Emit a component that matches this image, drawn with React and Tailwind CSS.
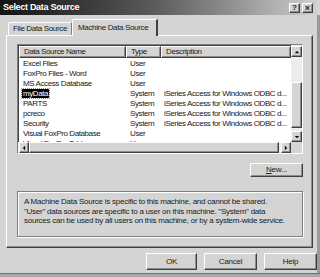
import React from 'react';

const rows = [
  { name: 'Excel Files', type: 'User', desc: '' },
  { name: 'FoxPro Files - Word', type: 'User', desc: '' },
  { name: 'MS Access Database', type: 'User', desc: '' },
  { name: 'myData', type: 'System', desc: 'iSeries Access for Windows ODBC d...', selected: true },
  { name: 'PARTS', type: 'System', desc: 'iSeries Access for Windows ODBC d...' },
  { name: 'pcreco', type: 'System', desc: 'iSeries Access for Windows ODBC d...' },
  { name: 'Security', type: 'System', desc: 'iSeries Access for Windows ODBC d...' },
  { name: 'Visual FoxPro Database', type: 'User', desc: '' },
  { name: 'Visual FoxPro Tables', type: 'User', desc: '' },
];

const raised = 'border border-t-white border-l-white border-r-[#404040] border-b-[#404040] shadow-[inset_-1px_-1px_0_#8c8c8c]';

const Button = ({ children, className = '' }) => (
  <div className={`flex items-center justify-center bg-[#d4d4d4] text-[8px] tracking-[-0.2px] text-[#202020] ${raised} ${className}`}>
    {children}
  </div>
);

const Arrow = ({ dir }) => {
  const pts = {
    up: '1,4 4,1 7,4',
    down: '1,1 4,4 7,1',
    left: '4,1 1,4 4,7',
    right: '1,1 4,4 1,7',
  }[dir];
  const vb = dir === 'up' || dir === 'down' ? '0 0 8 5' : '0 0 5 8';
  return (
    <svg viewBox={vb} className={dir === 'up' || dir === 'down' ? 'w-[6px] h-[4px]' : 'w-[4px] h-[6px]'}>
      <polygon points={pts} fill="#000" />
    </svg>
  );
};

export default function App() {
  return (
    <div className="w-[320px] h-[277px] bg-[#d4d4d4] overflow-hidden flex flex-col font-['Liberation_Sans',Arial,sans-serif] text-[#202020]">
      {/* title bar */}
      <div className="h-[15px] flex items-center justify-between pl-[3px] pr-[4px] bg-gradient-to-r from-[#141414] via-[#5e5e5e] to-[#d0d0d0] mr-[3px]">
        <span className="text-white font-bold text-[9px] leading-none tracking-[-0.3px]">Select Data Source</span>
        <div className="flex gap-[2px] mt-[1px]">
          <div className={`w-[11px] h-[10px] bg-[#d4d4d4] flex items-center justify-center text-[8px] font-bold leading-none ${raised}`}>?</div>
          <div className={`w-[11px] h-[10px] bg-[#d4d4d4] flex items-center justify-center text-[9px] font-bold leading-none ${raised}`}>×</div>
        </div>
      </div>

      <div className="flex-1 flex flex-col border-r-[3px] border-r-[#9a9a9a]">
        {/* tabs */}
        <div className="h-[20px] flex items-end pl-[8px] text-[8px] tracking-[-0.35px]">
          <div className="h-[13px] w-[64px] pl-[4px] flex items-center border-t border-l border-t-white border-l-white border-r border-r-[#808080] rounded-tl-[2px]">
            File Data Source
          </div>
          <div className="h-[17px] w-[86px] -mb-px relative z-10 bg-[#d4d4d4] pl-[5px] flex items-center border-t border-l border-t-white border-l-white border-r-2 border-r-[#404040] rounded-tl-[2px]">
            Machine Data Source
          </div>
        </div>

        {/* panel */}
        <div className="ml-[6px] w-[307px] h-[213px] border border-t-white border-l-white border-r-[#404040] border-b-[#404040] shadow-[inset_-1px_-1px_0_#8c8c8c] flex flex-col pl-[10px] pt-[8px]">
          {/* list */}
          <div className="w-[286px] h-[110px] bg-white border border-t-[#808080] border-l-[#808080] border-r-white border-b-white shadow-[inset_1px_1px_0_#404040] flex flex-col">
            <div className="flex-1 flex min-h-0">
              <div className="flex-1 flex flex-col min-w-0 pl-px pt-px text-[8px] tracking-[-0.4px]">
                <div className="h-[12px] flex leading-none">
                  <div className={`w-[107px] bg-[#d4d4d4] flex items-center pl-[4px] ${raised}`}>Data Source Name</div>
                  <div className={`w-[35px] bg-[#d4d4d4] flex items-center pl-[4px] ${raised}`}>Type</div>
                  <div className={`flex-1 bg-[#d4d4d4] flex items-center pl-[4px] ${raised}`}>Description</div>
                </div>
                <div className="flex-1 overflow-hidden pt-[1px]">
                  {rows.map((r) => (
                    <div key={r.name} className="h-[10px] flex leading-[10px] whitespace-nowrap">
                      <div className="w-[107px] pl-[3px]">
                        <span className={r.selected ? 'bg-black text-white px-[1px] outline outline-1 outline-dotted outline-[#888]' : 'px-[1px]'}>{r.name}</span>
                      </div>
                      <div className="w-[35px] pl-[4px]">{r.type}</div>
                      <div className="flex-1 pl-[3px] overflow-hidden">{r.desc}</div>
                    </div>
                  ))}
                </div>
              </div>
              {/* vertical scrollbar */}
              <div className="w-[11px] flex flex-col bg-[#ececec] pt-px">
                <Button className="h-[11px] w-[11px] shrink-0"><Arrow dir="up" /></Button>
                <div className="h-[25px]" />
                <div className={`h-[46px] bg-[#d4d4d4] ${raised}`} />
                <div className="flex-1" />
                <Button className="h-[11px] w-[11px] shrink-0"><Arrow dir="down" /></Button>
              </div>
            </div>
            {/* horizontal scrollbar */}
            <div className="h-[11px] flex bg-[#ececec] pl-px">
              <Button className="w-[10px] h-[11px] shrink-0"><Arrow dir="left" /></Button>
              <div className={`w-[250px] h-[11px] bg-[#d4d4d4] ${raised}`} />
              <div className="flex-1" />
              <Button className="w-[10px] h-[11px] shrink-0"><Arrow dir="right" /></Button>
              <div className="w-[11px] bg-[#d4d4d4]" />
            </div>
          </div>

          {/* New button */}
          <div className="w-[286px] flex justify-end mt-[9px]">
            <Button className="w-[53px] h-[14px]"><span><u>N</u>ew...</span></Button>
          </div>

          {/* info box */}
          <div className="w-[286px] h-[46px] mt-[14px] border border-[#808080] shadow-[inset_1px_1px_0_white,1px_1px_0_white] pl-[6px] pt-[5px] text-[8px] leading-[9.5px] tracking-[-0.25px] whitespace-nowrap text-[#202020]">
            <p>A Machine Data Source is specific to this machine, and cannot be shared.</p>
            <p>"User" data sources are specific to a user on this machine. "System" data</p>
            <p>sources can be used by all users on this machine, or by a system-wide service.</p>
          </div>
        </div>

        {/* bottom buttons */}
        <div className="flex justify-end gap-[7px] mt-[5px]">
          <Button className="w-[51px] h-[17px]">OK</Button>
          <Button className="w-[53px] h-[17px]">Cancel</Button>
          <Button className="w-[53px] h-[17px]">Help</Button>
        </div>
      </div>
      <div className="h-[4px] border-t border-t-[#707070] bg-[#a8a8a8]" />
    </div>
  );
}
